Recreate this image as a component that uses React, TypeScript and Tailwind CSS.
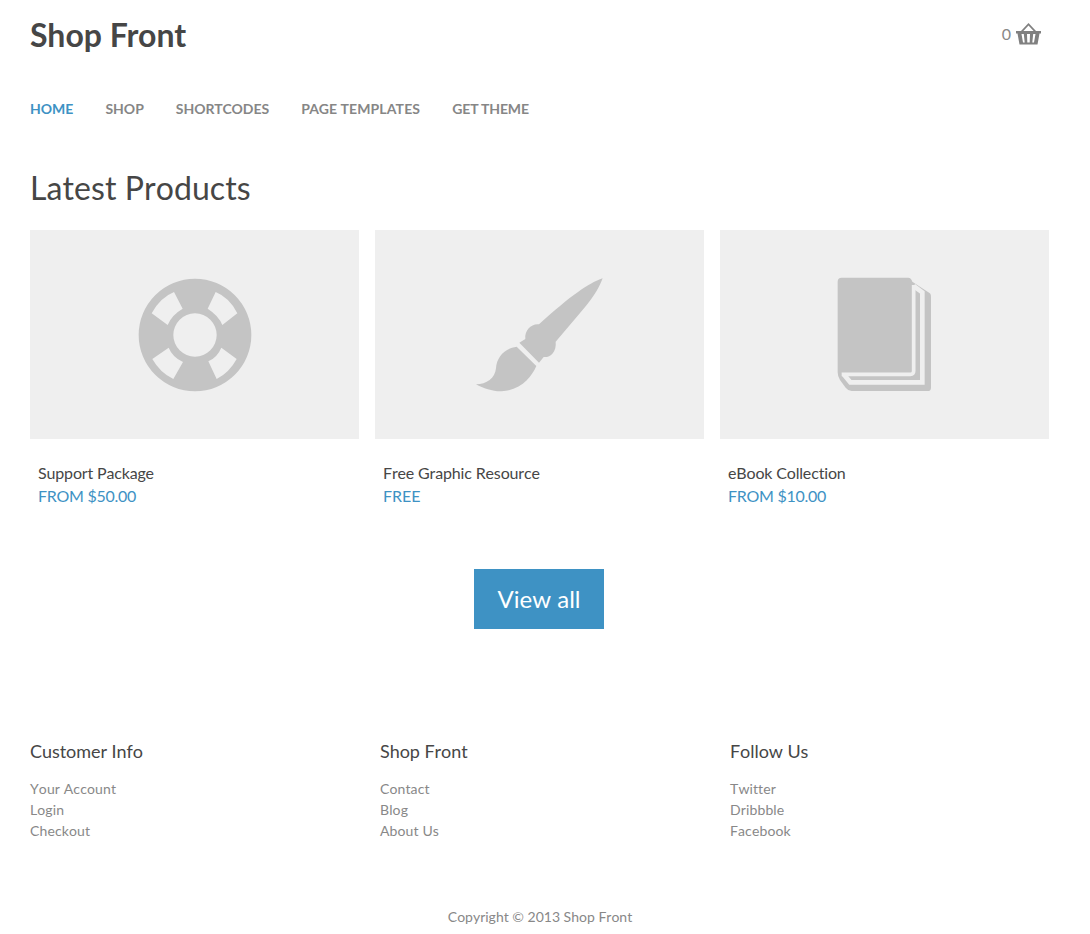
import React from "react";

function Lifebuoy() {
  return (
    <svg width="149" height="149" viewBox="0 0 447 447" fill="#c4c4c4">
      <path
        fillRule="evenodd"
        d="M225 56a169 169 0 1 0 0 338a169 169 0 1 0 0-338ZM225 160a65 65 0 1 1 0 130a65 65 0 1 1 0-130ZM287 96Q329 113 352 160L307 195Q296 167 263 146ZM162 96Q120 113 95 160L143 195Q155 165 188 146ZM97 297Q120 338 160 357L189 306Q158 292 146 263ZM290 357Q328 338 350 297L304 263Q292 292 265 304Z"
      />
    </svg>
  );
}

function Brush() {
  return (
    <svg width="149" height="139" viewBox="0 0 447 417" fill="#c4c4c4">
      <path d="M413 40C370 55 320 90 222 178C200 175 178 195 181 222L163 233L222 293L236 276C255 278 275 262 272 230L340 150C380 105 400 75 413 40Z" />
      <path d="M155 245L214 303C200 335 170 375 110 379C85 380 55 370 33 358C65 358 90 340 93 310C95 275 120 250 155 245Z" />
    </svg>
  );
}

function Book() {
  return (
    <svg width="119" height="139" viewBox="0 0 357 417" fill="none">
      <path
        fill="#c4c4c4"
        d="M50 38H250Q258 38 262 50L310 82Q318 85 318 95V368Q318 378 308 378H80Q70 378 62 368L45 345Q38 335 38 322V50Q38 38 50 38Z"
      />
      <path stroke="#efefef" strokeWidth="11" d="M266 60V318Q266 328 256 328H50" />
      <path stroke="#efefef" strokeWidth="14" d="M266 63L292 82V352H76L56 328" />
    </svg>
  );
}

function Basket() {
  return (
    <svg width="25" height="22" viewBox="0 0 25 22" fill="#808080">
      <path d="M12.5 0L5 8H7.4L12.5 2.6L17.6 8H20Z" />
      <path
        fillRule="evenodd"
        d="M0 8H25V10.5H23.5L21.5 21.5H3.5L1.5 10.5H0ZM5.5 11L7 19.5H8.7L7.8 11ZM11 11L11.3 19.5H13.7L14 11ZM17.2 11L16.3 19.5H18L19.5 11Z"
      />
    </svg>
  );
}

const products = [
  { name: "Support Package", price: "FROM $50.00", icon: <Lifebuoy />, priceClass: "tracking-[-0.27px]" },
  { name: "Free Graphic Resource", price: "FREE", icon: <Brush />, priceClass: "" },
  { name: "eBook Collection", price: "FROM $10.00", icon: <Book />, priceClass: "tracking-[-0.27px]" },
];

const footer = [
  { title: "Customer Info", links: ["Your Account", "Login", "Checkout"] },
  { title: "Shop Front", links: ["Contact", "Blog", "About Us"] },
  { title: "Follow Us", links: ["Twitter", "Dribbble", "Facebook"] },
];

const nav = [
  { label: "Home", cls: "text-[#3e92c4]" },
  { label: "Shop", cls: "" },
  { label: "Shortcodes", cls: "" },
  { label: "Page Templates", cls: "tracking-[0.14px]" },
  { label: "Get Theme", cls: "tracking-[-0.1px]" },
];

export default function App() {
  return (
    <div className="bg-white min-h-[934px] px-[30px] font-['Lato',sans-serif] [font-kerning:none] text-[#464646]">
      <header className="flex justify-between items-start pt-[14px] h-[84px] pr-[19px]">
        <h1 className="text-[32px] leading-[42px] font-bold [font-kerning:normal]">Shop Front</h1>
        <div className="flex items-center gap-[5px] pt-[8px] text-[#888888] text-[16px] leading-[24px]">
          <span>0</span>
          <Basket />
        </div>
      </header>
      <nav className="flex gap-[32px] h-[50px] pt-[16px] text-[14px] leading-[18px] font-bold uppercase text-[#868686] [font-kerning:normal]">
        {nav.map((n) => (
          <a key={n.label} className={n.cls}>
            {n.label}
          </a>
        ))}
      </nav>
      <h2 className="mt-[34px] text-[32px] leading-[40px] font-normal tracking-[0.07px]">Latest Products</h2>
      <div className="mt-[22px] grid grid-cols-3 gap-[16px] w-[1019px]">
        {products.map((p) => (
          <div key={p.name}>
            <div className="h-[209px] bg-[#efefef] flex items-center justify-center">{p.icon}</div>
            <div className="mt-[22px] px-[8px] text-[16px] leading-[23px]">
              <div className="tracking-[-0.16px]">{p.name}</div>
              <div className={"text-[#3e92c4] " + p.priceClass}>{p.price}</div>
            </div>
          </div>
        ))}
      </div>
      <div className="mt-[62px] flex justify-center w-[1018px]">
        <a className="w-[130px] h-[60px] bg-[#3e92c4] text-white text-[24px] flex items-center justify-center">
          View all
        </a>
      </div>
      <footer className="mt-[110px] grid grid-cols-[350px_350px_320px]">
        {footer.map((c) => (
          <div key={c.title}>
            <h3 className="text-[18px] leading-[24px] font-normal tracking-[-0.06px]">{c.title}</h3>
            <ul className="mt-[15px] text-[14px] leading-[21px] text-[#888888] tracking-[0.12px]">
              {c.links.map((l) => (
                <li key={l}>{l}</li>
              ))}
            </ul>
          </div>
        ))}
      </footer>
      <div className="mt-[65px] text-center w-[1020px] text-[14px] leading-[21px] text-[#888888]">
        Copyright © 2013 Shop Front
      </div>
    </div>
  );
}
